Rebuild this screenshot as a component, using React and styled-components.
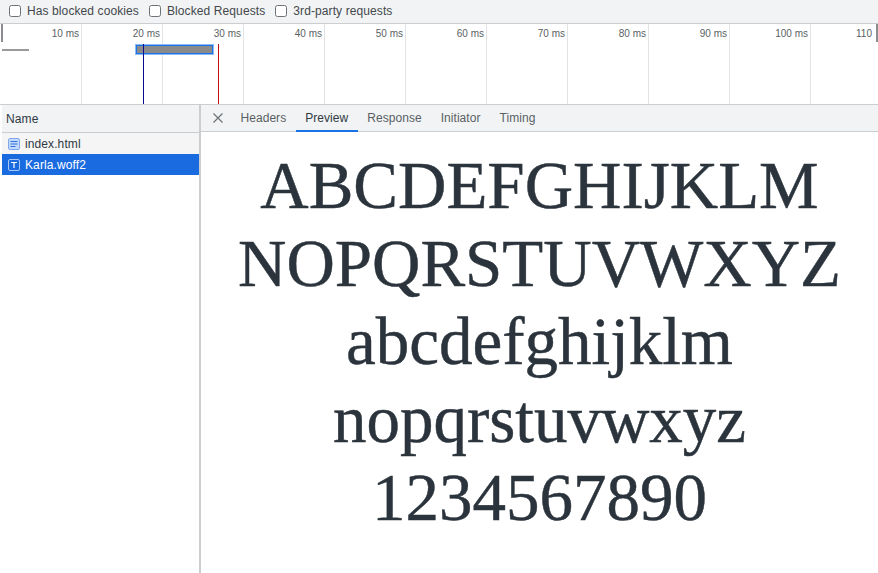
import React from "react";
import styled, { createGlobalStyle } from "styled-components";

const FILTERS = ["Has blocked cookies", "Blocked Requests", "3rd-party requests"];
const TICKS = ["10 ms", "20 ms", "30 ms", "40 ms", "50 ms", "60 ms", "70 ms", "80 ms", "90 ms", "100 ms", "110"];
const TABS = ["Headers", "Preview", "Response", "Initiator", "Timing"];
const SAMPLE = [
  "ABCDEFGHIJKLM",
  "NOPQRSTUVWXYZ",
  "abcdefghijklm",
  "nopqrstuvwxyz",
  "1234567890",
];

const GlobalStyle = createGlobalStyle`
  html, body {
    margin: 0;
    height: 100%;
    overflow: hidden;
    background: #fff;
  }
  #root {
    height: 100%;
  }
`;

const App = () => {
  return (
    <Page>
      <GlobalStyle />
      <FilterBar>
        {FILTERS.map((label) => (
          <FilterLabel key={label}>
            <FilterBox type="checkbox" />
            {label}
          </FilterLabel>
        ))}
      </FilterBar>
      <Overview>
        <TickRow>
          {TICKS.map((tick) => (
            <Tick key={tick}>{tick}</Tick>
          ))}
        </TickRow>
        <Handle $side="left" />
        <Handle $side="right" />
        <DocLine />
        <FontBar />
        <BlueMarker />
        <RedMarker />
      </Overview>
      <Split>
        <Requests>
          <NameHeader>Name</NameHeader>
          <RequestRow>
            <FileIcon>
              <svg width="12" height="12" viewBox="0 0 12 12">
                <rect x="0.5" y="0.5" width="11" height="11" rx="1.5" fill="#c4d9f9" stroke="#7fa8f0" />
                <path d="M2.5 3.5h7M2.5 6h7M2.5 8.5h5" stroke="#2f72dc" strokeWidth="1" />
              </svg>
            </FileIcon>
            index.html
          </RequestRow>
          <RequestRow $selected>
            <FileIcon>
              <svg width="12" height="12" viewBox="0 0 12 12">
                <rect x="0.5" y="0.5" width="11" height="11" rx="1.5" fill="#1a6be0" stroke="#a9c7f5" />
                <path d="M3 3.5h6M6 3.5v5.5" stroke="#fff" strokeWidth="1.2" />
              </svg>
            </FileIcon>
            Karla.woff2
          </RequestRow>
        </Requests>
        <Details>
          <TabBar>
            <CloseButton>
              <svg width="10" height="10" viewBox="0 0 10 10">
                <path d="M0.5 0.5l9 9M9.5 0.5l-9 9" stroke="#6e7175" strokeWidth="1.2" />
              </svg>
            </CloseButton>
            {TABS.map((tab) => (
              <Tab key={tab} $active={tab === "Preview"}>
                {tab}
              </Tab>
            ))}
          </TabBar>
          <FontPreview>
            {SAMPLE.map((line) => (
              <SampleLine key={line}>{line}</SampleLine>
            ))}
          </FontPreview>
        </Details>
      </Split>
    </Page>
  );
};

const Page = styled.div`
  display: flex;
  flex-direction: column;
  width: 878px;
  height: 573px;
  overflow: hidden;
  font-family: "Liberation Sans", Arial, sans-serif;
  font-size: 12px;
  letter-spacing: 0.1px;
  color: #303942;
`;

const FilterBar = styled.div`
  display: flex;
  align-items: center;
  gap: 10px;
  flex: none;
  box-sizing: border-box;
  height: 24px;
  padding: 0 0 2px 9px;
  background: #f1f3f4;
  border-bottom: 1px solid #cbcdd1;
`;

const FilterLabel = styled.label`
  display: flex;
  align-items: center;
  gap: 6px;
  color: #44484c;
`;

const FilterBox = styled.input`
  appearance: none;
  box-sizing: border-box;
  width: 12px;
  height: 12px;
  margin: 0;
  background: #fff;
  border: 1px solid #6e7175;
  border-radius: 2.5px;
`;

const Overview = styled.div`
  position: relative;
  flex: none;
  height: 80px;
  overflow: hidden;
  background: #fff;
`;

const TickRow = styled.div`
  display: flex;
  height: 100%;
  padding-left: 1px;
`;

const Tick = styled.div`
  flex: none;
  box-sizing: border-box;
  width: 81px;
  padding: 3px 2px 0 0;
  font-size: 10px;
  letter-spacing: 0;
  line-height: 13px;
  text-align: right;
  color: #5a5f64;
  border-right: 1px solid #e1e3e6;

  &:last-child {
    width: 67px;
    padding-right: 6px;
    border-right: 0;
  }
`;

const Handle = styled.div`
  position: absolute;
  top: 0;
  ${({ $side }) => ($side === "left" ? "left: 1px;" : "right: 0;")}
  width: 2px;
  height: 18px;
  background: #8b8d90;
`;

const DocLine = styled.div`
  position: absolute;
  top: 25px;
  left: 2px;
  width: 27px;
  height: 2px;
  background: #9a9a9a;
`;

const FontBar = styled.div`
  position: absolute;
  top: 20px;
  left: 135px;
  box-sizing: border-box;
  width: 79px;
  height: 11px;
  background: #8a8a8a;
  border: 2px solid #1a73e8;
  outline: 1px solid #8db9f5;
  outline-offset: -1px;
`;

const BlueMarker = styled.div`
  position: absolute;
  top: 20px;
  bottom: 0;
  left: 143px;
  width: 1px;
  background: #0a0a8c;
`;

const RedMarker = styled.div`
  position: absolute;
  top: 20px;
  bottom: 0;
  left: 218px;
  width: 1px;
  background: #c80f0f;
`;

const Split = styled.div`
  display: flex;
  flex: 1;
  min-height: 0;
  border-top: 1px solid #cbcdd1;
`;

const Requests = styled.div`
  flex: none;
  box-sizing: border-box;
  width: 201px;
  padding-left: 2px;
  background: #fff;
  border-right: 2px solid #cbcdd1;
`;

const NameHeader = styled.div`
  box-sizing: border-box;
  height: 28px;
  padding: 7px 0 0 4px;
  line-height: 14px;
  background: #f1f3f4;
  border-bottom: 1px solid #cbcdd1;
`;

const RequestRow = styled.div`
  display: flex;
  align-items: center;
  gap: 5px;
  height: 21px;
  padding-left: 6px;
  background: ${({ $selected }) => ($selected ? "#1a6be0" : "#f5f5f5")};
  color: ${({ $selected }) => ($selected ? "#fff" : "#303942")};
`;

const FileIcon = styled.span`
  display: flex;
  flex: none;
`;

const Details = styled.div`
  display: flex;
  flex: 1;
  flex-direction: column;
  min-width: 0;
`;

const TabBar = styled.div`
  display: flex;
  align-items: stretch;
  flex: none;
  box-sizing: border-box;
  height: 27px;
  padding-left: 12px;
  background: #f1f3f4;
  border-bottom: 1px solid #cbcdd1;
`;

const CloseButton = styled.div`
  display: flex;
  align-items: center;
  margin-right: 8px;
`;

const Tab = styled.div`
  display: flex;
  align-items: center;
  margin-bottom: -1px;
  padding: 0 9.5px;
  letter-spacing: 0.05px;
  color: ${({ $active }) => ($active ? "#303942" : "#5a5f64")};
  border-bottom: 2px solid ${({ $active }) => ($active ? "#1a73e8" : "transparent")};
`;

const FontPreview = styled.div`
  flex: 1;
  padding-top: 14px;
  text-align: center;
  font-family: "Liberation Serif", "Times New Roman", serif;
  font-size: 67px;
  letter-spacing: 0;
  line-height: 78px;
  color: #2b343c;
  -webkit-text-stroke: 0.45px #2b343c;
`;

const SampleLine = styled.div`
  white-space: nowrap;
`;

export default App;
